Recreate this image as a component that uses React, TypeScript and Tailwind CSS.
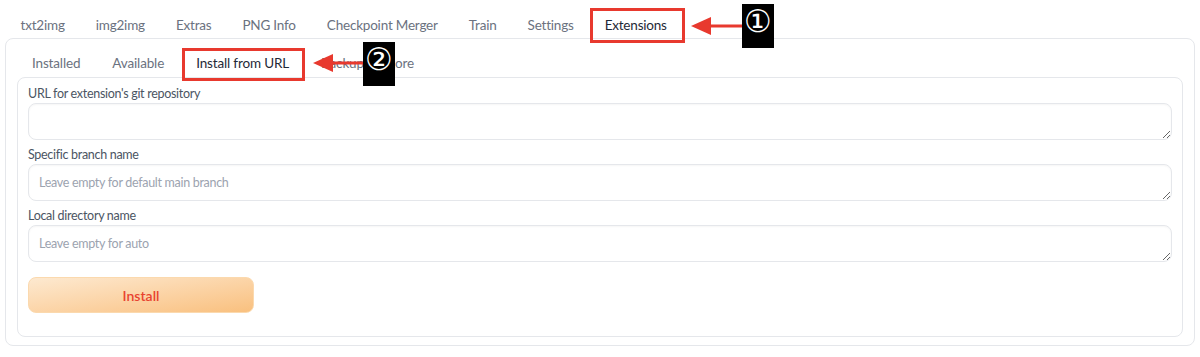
import React from 'react';

const topTabs = ['txt2img', 'img2img', 'Extras', 'PNG Info', 'Checkpoint Merger', 'Train', 'Settings', 'Extensions'];
const subTabs = ['Installed', 'Available', 'Install from URL', 'Backup/Restore'];

function Field({ label, placeholder }: { label: string; placeholder?: string }) {
  return (
    <div className="flex flex-col">
      <label className="text-[12.5px] leading-[16px] tracking-[-0.3px] text-[#4b5563] mb-[1px]">{label}</label>
      <textarea
        rows={1}
        placeholder={placeholder}
        className="h-[37px] w-full rounded-lg border border-[#e5e7eb] bg-white px-[10px] py-[9px] text-[12.5px] leading-[18px] tracking-[-0.3px] text-[#374151] placeholder:text-[#9ca3af] shadow-[inset_0_1px_2px_rgba(0,0,0,0.04)] outline-none"
      />
    </div>
  );
}

function Arrow({ className }: { className: string }) {
  return (
    <svg className={className} width="52" height="20" viewBox="0 0 52 20">
      <polygon points="0,10 20,1 20,19" fill="#e8392e" />
      <rect x="18" y="8.5" width="34" height="3" fill="#e8392e" />
    </svg>
  );
}

export default function App() {
  return (
    <div className="relative w-[1200px] h-[357px] overflow-hidden bg-white font-['Lato','Noto_Sans',sans-serif]">
      <div className="px-[5px]">
        {/* main tabs */}
        <div className="flex h-[38px] items-end pb-[3px]">
          {topTabs.map((t) => (
            <div
              key={t}
              className={
                'px-[15.5px] text-[13.5px] leading-[20px] tracking-[-0.2px] ' +
                (t === 'Extensions' ? 'text-[#1f2937]' : 'text-[#6b7280]')
              }
            >
              {t}
            </div>
          ))}
        </div>

        {/* outer panel */}
        <div className="h-[308px] rounded-lg border border-[#e5e7eb] pl-[10px] pr-[11px] pb-[8px]">
          <div className="flex h-[38px] items-end pb-[4px]">
            {subTabs.map((t) => (
              <div
                key={t}
                className={
                  'px-[16px] text-[13.5px] leading-[20px] tracking-[-0.15px] ' +
                  (t === 'Install from URL' ? 'text-[#1f2937]' : 'text-[#6b7280]')
                }
              >
                {t}
              </div>
            ))}
          </div>

          {/* inner panel */}
          <div className="ml-[1px] flex h-[260px] flex-col rounded-lg border border-[#e5e7eb] px-[10px] pt-[8px]">
            <Field label="URL for extension's git repository" />
            <div className="mt-[7px]">
              <Field label="Specific branch name" placeholder="Leave empty for default main branch" />
            </div>
            <div className="mt-[7px]">
              <Field label="Local directory name" placeholder="Leave empty for auto" />
            </div>
            <button className="mt-[15px] h-[36px] w-[226px] rounded-lg border border-[#fbd9ae] bg-gradient-to-br from-[#fde9d0] to-[#f9c07e] text-[14px] font-semibold text-[#e8432f]">
              Install
            </button>
          </div>
        </div>
      </div>

      {/* annotations */}
      <div className="absolute left-[590px] top-[8px] h-[35px] w-[95px] border-[3px] border-[#e8392e]" />
      <Arrow className="absolute left-[691px] top-[16px]" />
      <div className="absolute left-[742px] top-[4px] flex h-[44px] w-[32px] justify-center bg-black text-[31px] leading-[34px] text-white font-['DejaVu_Sans',sans-serif]">
        ①
      </div>

      <div className="absolute left-[182px] top-[48px] h-[33px] w-[123px] border-[3px] border-[#e8392e]" />
      <Arrow className="absolute left-[313px] top-[53px]" />
      <div className="absolute left-[363px] top-[42px] flex h-[44px] w-[32px] justify-center bg-black text-[31px] leading-[34px] text-white font-['DejaVu_Sans',sans-serif]">
        ②
      </div>
    </div>
  );
}
